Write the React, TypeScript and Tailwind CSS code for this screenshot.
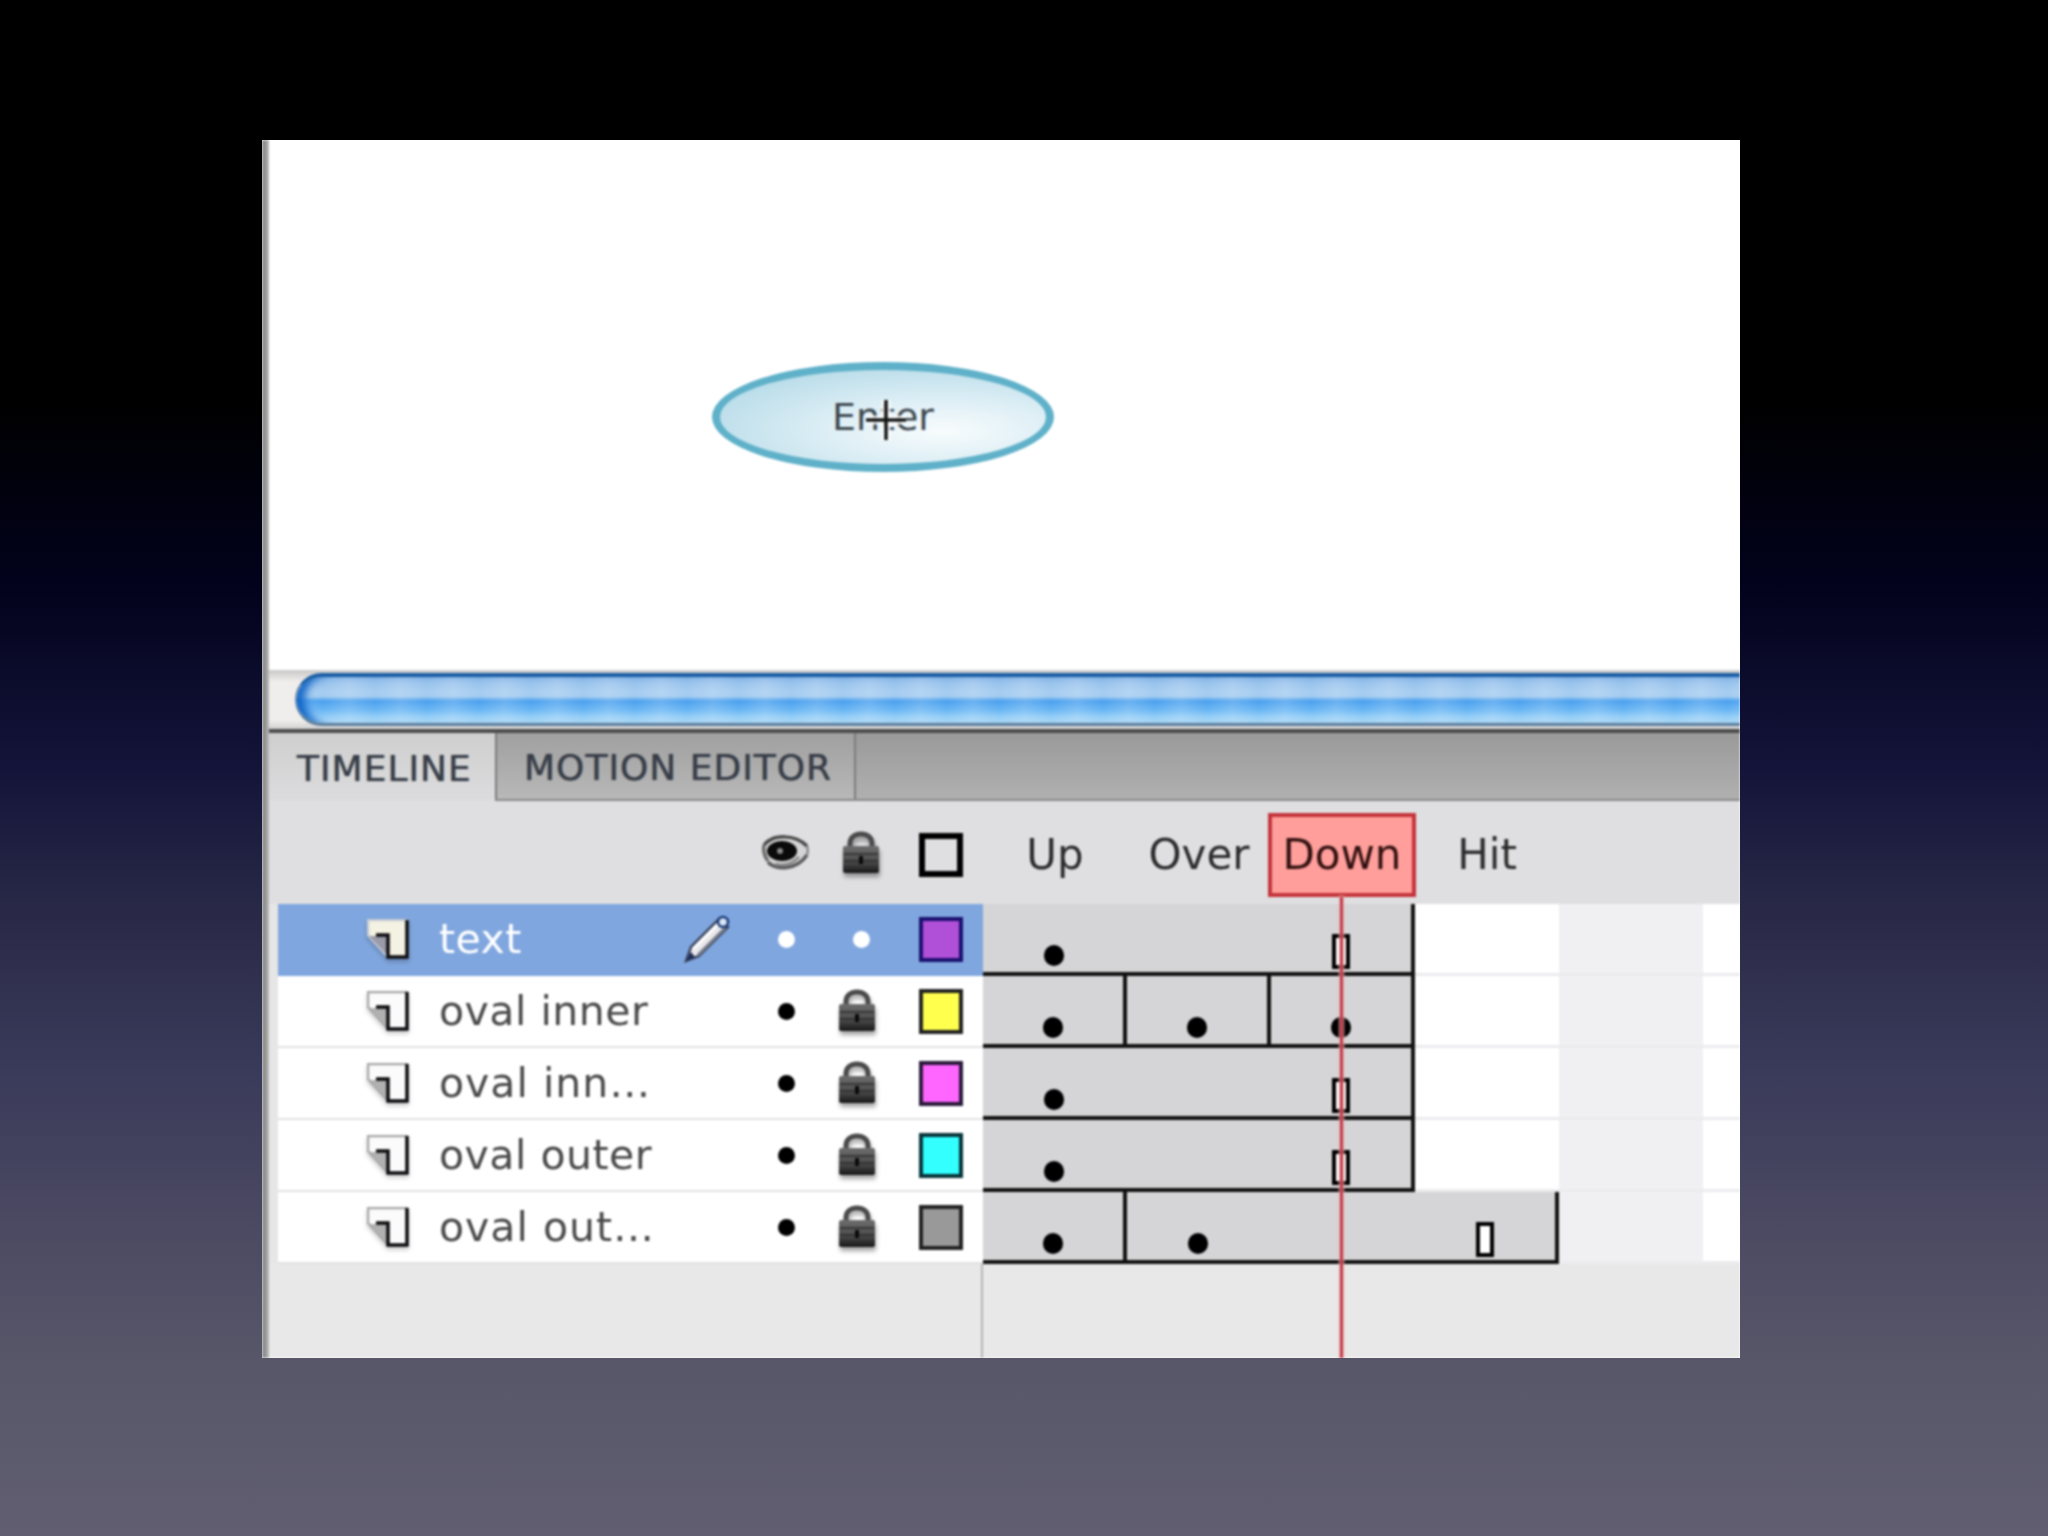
import React from 'react';

type Marker = 'dot' | 'hold' | null;

interface Layer {
	name: string;
	swatch: string;
	span: Marker[][];
	active?: boolean;
}

const layers: Layer[] = [
	{
		name: 'text',
		active: true,
		swatch: 'bg-[#b04fd8] border-[#1b1070]',
		span: [['dot', null, 'hold']],
	},
	{
		name: 'oval inner',
		swatch: 'bg-[#ffff4d] border-[#222222]',
		span: [['dot'], ['dot'], ['dot']],
	},
	{
		name: 'oval inn…',
		swatch: 'bg-[#ff66ff] border-[#2a1a3a]',
		span: [['dot', null, 'hold']],
	},
	{
		name: 'oval outer',
		swatch: 'bg-[#33ffff] border-[#06343a]',
		span: [['dot', null, 'hold']],
	},
	{
		name: 'oval out…',
		swatch: 'bg-[#999999] border-[#222222]',
		span: [['dot'], ['dot', null, 'hold']],
	},
];

const spanWidth: Record<number, string> = {
	1: 'w-[144px]',
	3: 'w-[432px]',
};

const PageIcon = ({ active }: { active?: boolean }) => (
	<svg width="42" height="40" viewBox="0 0 42 40" className="shrink-0 drop-shadow-[0_3px_2px_rgba(0,0,0,0.2)]">
		<path d="M1 1H40V38H21L1 16Z" fill={active ? '#f4f2e2' : '#fbfbfb'} stroke={active ? '#c8ccd8' : '#a8a8a8'} strokeWidth="2.5" />
		<path d="M2 17H21V37Z" fill={active ? '#9a9aa8' : '#b0b0b0'} />
		<path d="M40 1V38H21V16H9" fill="none" stroke="#0c0c10" strokeWidth="3.5" />
	</svg>
);

const Pencil = () => (
	<svg width="48" height="50" viewBox="0 0 48 50" className="shrink-0">
		<path d="M2 47L7 33L35 5L44 13L15 42Z" fill="#e8e8ec" stroke="#3c4660" strokeWidth="2.5" />
		<path d="M9 35L36 8" stroke="#ffffff" strokeWidth="3" />
		<path d="M14 41L41 14" stroke="#7a7f8c" strokeWidth="3" />
		<path d="M2 47L7 38L11 43Z" fill="#1c2c58" />
		<circle cx="39" cy="8" r="5" fill="#d8e6f6" stroke="#1c3a78" strokeWidth="2.5" />
	</svg>
);

const Lock = () => (
	<svg width="38" height="44" viewBox="0 0 38 44" className="shrink-0 drop-shadow-[1px_4px_2px_rgba(0,0,0,0.35)]">
		<defs>
			<linearGradient id="lockBody" x1="0" y1="0" x2="0" y2="1">
				<stop offset="0" stopColor="#6e6e6e" />
				<stop offset="0.6" stopColor="#4a4a4a" />
				<stop offset="1" stopColor="#161616" />
			</linearGradient>
		</defs>
		<path d="M8 18V13C8 6 13 3 19 3S30 6 30 13V18" fill="none" stroke="#4a4a4a" strokeWidth="5" />
		<rect x="1" y="15" width="36" height="27" rx="2" fill="url(#lockBody)" />
		<path d="M2 23H36M2 30H36" stroke="#2c2c2c" strokeWidth="1.5" />
		<path d="M17 25H21V33H17Z" fill="#0a0a0a" />
	</svg>
);

const Eye = () => (
	<svg width="48" height="38" viewBox="0 0 48 38" className="shrink-0">
		<path d="M3 11C12 1 34 1 46 11C46 24 36 35 24 35C12 35 5 24 3 11Z" fill="#d4d4d6" />
		<path d="M3 11C12 0 34 0 46 12" fill="none" stroke="#4a4a4a" strokeWidth="3.5" />
		<path d="M3 11C2 17 4 23 7 27" fill="none" stroke="#6c6c6c" strokeWidth="3.5" />
		<path d="M7 28C15 37 36 36 46 21" fill="none" stroke="#5c5c5c" strokeWidth="3.5" />
		<path d="M46 12C47 15 47 18 46 21" fill="none" stroke="#8a8a8a" strokeWidth="2.5" />
		<ellipse cx="21" cy="17" rx="15" ry="10" fill="#0a0a0a" />
		<circle cx="19" cy="17" r="3" fill="#8a8a8a" />
		<path d="M14 30C22 32 31 30 38 23" fill="none" stroke="#8a8a8a" strokeWidth="2.5" />
	</svg>
);

const Crosshair = () => (
	<svg width="40" height="40" viewBox="0 0 40 40" className="absolute left-[146px] top-[30px]">
		<path d="M20 0V40M0 20H40" stroke="#ffffff" strokeWidth="9" opacity="0.8" />
		<path d="M20 0V40M0 20H40" stroke="#141414" strokeWidth="3.5" />
	</svg>
);

const Frame = ({ marker }: { marker: Marker }) => (
	<div className="flex-1 min-w-0 flex justify-center items-end pb-[3px]">
		{marker === 'dot' && <div className="w-[20px] h-[21px] rounded-full bg-black mb-[3px]" />}
		{marker === 'hold' && <div className="w-[18px] h-[35px] ml-[2px] border-[4px] border-black bg-white" />}
	</div>
);

const FrameRow = ({ layer }: { layer: Layer }) => {
	const used = layer.span.reduce((n, s) => n + s.length, 0);
	const empties = ['bg-white', 'bg-[#f0f0f2]', 'bg-white'].slice(used - 3);
	return (
		<div className="flex flex-1 min-w-0">
			{layer.span.map((span, i) => (
				<div key={i} className={`${spanWidth[span.length]} shrink-0 flex bg-[#d5d5d7] border-r-[4px] border-b-[4px] border-[#111111] box-border`}>
					{span.map((marker, j) => (
						<Frame key={j} marker={marker} />
					))}
				</div>
			))}
			{empties.map((bg, i) => (
				<div key={i} className={`${bg} border-b-[3px] border-[#ececee] shrink-0 ${i === empties.length - 1 ? 'flex-1' : 'w-[144px]'}`} />
			))}
		</div>
	);
};

const LayerRow = ({ layer }: { layer: Layer }) => {
	const textTone = layer.active ? 'text-white' : 'text-[#4a4a4a]';
	const cut = layer.name.endsWith('…');
	return (
		<div className="flex h-[72px]">
			<div className="w-[9px] bg-[#e6e6e6] shrink-0" />
			<div
				className={`w-[705px] shrink-0 flex items-center pl-[89px] border-b-[2px] ${
					layer.active ? 'bg-[#7fa6de] border-[#7fa6de]' : 'bg-white border-[#e2e2e2]'
				}`}
			>
				<PageIcon active={layer.active} />
				<div className={`w-[275px] shrink-0 pl-[30px] text-[41px] leading-none whitespace-nowrap ${cut ? 'tracking-[1px]' : 'tracking-[0.5px]'} ${textTone}`}>
					{layer.name}
				</div>
				<div className="w-[48px] shrink-0 flex justify-center">{layer.active && <Pencil />}</div>
				<div className="w-[72px] ml-[18px] shrink-0 flex justify-center">
					<div className={`w-[17px] h-[17px] rounded-full ${layer.active ? 'bg-white' : 'bg-black'}`} />
				</div>
				<div className={`w-[74px] shrink-0 flex justify-center ${layer.active ? 'pl-[5px]' : 'pr-[5px]'}`}>
					{layer.active ? <div className="w-[17px] h-[17px] rounded-full bg-white" /> : <Lock />}
				</div>
				<div className={`w-[44px] h-[45px] ml-[23px] shrink-0 border-[4px] ${layer.swatch}`} />
			</div>
			<FrameRow layer={layer} />
		</div>
	);
};

const HeadCell = ({ label, current }: { label: string; current?: boolean }) => (
	<div className="w-[144px] shrink-0 flex justify-center">
		<div
			className={`h-[84px] shrink-0 mt-[4px] flex items-center justify-center text-[42px] leading-none text-[#2c2c2c] ${
				current ? 'w-[148px] mr-[2px] bg-[#ff9e9a] border-[4px] border-[#c4333a] text-[#301010]' : 'w-[150px]'
			}`}
		>
			{label}
		</div>
	</div>
);

export default function App() {
	return (
		<div className="w-[2048px] h-[1536px] pt-[140px] pl-[262px] overflow-hidden font-['DejaVu_Sans','Liberation_Sans',sans-serif] bg-[linear-gradient(180deg,#000000_0%,#000000_26%,#02021c_38%,#14143a_50%,#2a2a48_60%,#3a3a5a_70%,#4c4a62_80%,#575568_88%,#605e70_100%)]">
			<div className="w-[1478px] h-[1218px] overflow-hidden bg-white">
				<div className="relative w-full h-full flex blur-[0.8px]">
					<div className="w-[7px] shrink-0 bg-[linear-gradient(90deg,#848484,#969696,#bcbcbc)]" />
					<div className="flex-1 min-w-0 flex flex-col">
						{/* stage */}
						<div className="h-[530px] shrink-0 bg-white pl-[443px] pt-[222px]">
							<div className="relative w-[342px] h-[110px] rounded-[50%] border-[8px] border-[#5fb1c9] flex items-center justify-center bg-[radial-gradient(ellipse_at_68%_65%,#f8fcfd_0%,#dceef5_38%,#a8d4e4_100%)]">
								<span className="text-[38px] leading-none text-[#3e4850]">Enter</span>
								<Crosshair />
							</div>
						</div>

						{/* scrollbar */}
						<div className="h-[59px] shrink-0 flex items-center pl-[26px] bg-[linear-gradient(180deg,#c8c8c8,#f0eeec_20%,#f0eeec_85%,#d0d0d0)]">
							<div className="flex-1 h-[53px] rounded-l-[27px] border-t-[4px] border-b-[3px] border-l-[2px] border-t-[#1d5fa5] border-b-[#5d7f9c] border-l-[#5d86b4] shadow-[inset_12px_0_8px_-4px_#1266c8] bg-[repeating-linear-gradient(90deg,rgba(255,255,255,0.16)_0px,rgba(255,255,255,0)_26px,rgba(255,255,255,0.16)_52px),linear-gradient(180deg,#8ebbe9_0%,#a5ccf0_30%,#a5ccf0_42%,#4aa0ee_52%,#6ab6f4_72%,#addcf8_96%,#c0e4fa_100%)]" />
						</div>
						<div className="h-[4px] shrink-0 bg-[#4c4c4c]" />

						{/* tabs */}
						<div className="h-[68px] shrink-0 flex text-[36px] leading-none tracking-[1px] text-[#383d48] [text-shadow:0_0_1px_#383d48] bg-[linear-gradient(180deg,#9a9a9a,#b0b0b0)] border-b-[2px] border-[#8a8a8a]">
							<div className="w-[226px] -mb-[2px] flex items-center pl-[28px] pt-[3px] bg-[linear-gradient(180deg,#cfcfcf,#dcdcde)]">TIMELINE</div>
							<div className="w-[361px] flex items-center pl-[27px] pt-[3px] border-l-[2px] border-r-[2px] border-[#7c7c7c] bg-[linear-gradient(180deg,#a0a0a0,#b8b8b8)]">
								MOTION EDITOR
							</div>
						</div>

						{/* timeline header */}
						<div className="h-[103px] shrink-0 flex items-center bg-[#dfdfe1] pl-[9px]">
							<div className="w-[705px] shrink-0 flex items-center h-full">
								<div className="w-[471px] shrink-0" />
								<div className="w-[72px] shrink-0 flex justify-center">
									<Eye />
								</div>
								<div className="w-[74px] shrink-0 flex justify-center pl-[6px]">
									<Lock />
								</div>
								<div className="w-[44px] h-[44px] ml-[24px] mt-[4px] shrink-0 border-[6px] border-black" />
							</div>
							<HeadCell label="Up" />
							<HeadCell label="Over" />
							<HeadCell label="Down" current />
							<HeadCell label="Hit" />
						</div>

						{/* layers */}
						{layers.map((layer) => (
							<LayerRow key={layer.name} layer={layer} />
						))}

						{/* empty area under the layers */}
						<div className="flex-1 flex">
							<div className="w-[714px] shrink-0 bg-[#e8e8e8] border-r-[2px] border-[#b4b4b4]" />
							<div className="flex-1 bg-[#e9e8e9]" />
						</div>
					</div>

					{/* playhead */}
					<div className="absolute left-[1078px] top-[757px] bottom-0 w-[3px] bg-[#c23c48] shadow-[0_0_0_1.5px_rgba(240,170,175,0.6)]" />
				</div>
			</div>
		</div>
	);
}
